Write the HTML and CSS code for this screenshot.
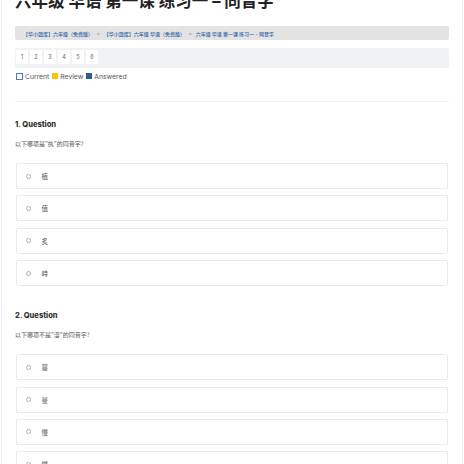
FILE: index.html
```html
<!DOCTYPE html>
<html lang="zh">
<head>
<meta charset="utf-8">
<title>六年级 华语 第一课 练习一 – 同音字</title>
<link rel="stylesheet" href="styles.css">
</head>
<body>
<div class="page">
  <h1 class="title">六年级 华语 第一课 练习一 – 同音字</h1>
  <div class="crumbs">
    <a class="crumb">【华小题库】六年级（免费版）</a>
    <span class="sep">&gt;</span>
    <a class="crumb">【华小题库】六年级 华语（免费版）</a>
    <span class="sep">&gt;</span>
    <span class="crumb">六年级 华语 第一课 练习一 – 同音字</span>
  </div>
  <div class="pager">
    <span class="pnum">1</span>
    <span class="pnum">2</span>
    <span class="pnum">3</span>
    <span class="pnum">4</span>
    <span class="pnum">5</span>
    <span class="pnum">6</span>
  </div>
  <div class="legend">
    <span class="sq sq-current"></span><span class="ltext">Current</span>
    <span class="sq sq-review"></span><span class="ltext">Review</span>
    <span class="sq sq-answered"></span><span class="ltext">Answered</span>
  </div>
  <div class="rule"></div>

  <div class="question">
    <h3 class="qhead">1. Question</h3>
    <p class="qtext">以下哪项是"执"的同音字?</p>
    <ul class="options">
      <li class="opt"><span class="radio"></span><span class="otext">植</span></li>
      <li class="opt"><span class="radio"></span><span class="otext">值</span></li>
      <li class="opt"><span class="radio"></span><span class="otext">炙</span></li>
      <li class="opt"><span class="radio"></span><span class="otext">峙</span></li>
    </ul>
  </div>

  <div class="question">
    <h3 class="qhead">2. Question</h3>
    <p class="qtext">以下哪项不是"漫"的同音字?</p>
    <ul class="options">
      <li class="opt"><span class="radio"></span><span class="otext">蔓</span></li>
      <li class="opt"><span class="radio"></span><span class="otext">曼</span></li>
      <li class="opt"><span class="radio"></span><span class="otext">慢</span></li>
      <li class="opt"><span class="radio"></span><span class="otext">馒</span></li>
    </ul>
  </div>
</div>
</body>
</html>
```
FILE: styles.css
```css
html, body {
  margin: 0;
  padding: 0;
  background: #ffffff;
}
body {
  font-family: Inter, "Noto Sans", "Noto Sans CJK SC", sans-serif;
  color: #444;
  overflow: hidden;
}
.page {
  margin: -9px 1px 0 1px;
  padding: 0 13px;
  border-left: 1px solid #f2f2f2;
  border-right: 1px solid #f2f2f2;
  min-height: 520px;
}
.title {
  margin: 0;
  font-size: 16.5px;
  line-height: 20px;
  font-weight: 700;
  color: #222;
  font-family: Inter, "Noto Sans CJK SC", sans-serif;
}
.crumbs {
  margin-top: 15px;
  height: 14px;
  display: flex;
  align-items: center;
  gap: 3px;
  padding: 0 8px;
  background: #e3e3e3;
  border-radius: 2px;
  font-size: 5px;
  font-family: "Noto Sans CJK SC", sans-serif;
}
.crumb {
  color: #3366aa;
  font-weight: 500;
}
.sep {
  color: #777;
  padding: 0 1px;
}
.pager {
  margin-top: 8px;
  height: 20px;
  box-sizing: border-box;
  padding: 2px 1px;
  display: flex;
  align-items: flex-start;
  gap: 2px;
  background: #f1f2f6;
  border-radius: 2px;
}
.pnum {
  width: 12px;
  height: 14px;
  background: #ffffff;
  display: flex;
  align-items: center;
  justify-content: center;
  font-size: 5.5px;
  color: #666;
}
.legend {
  margin-top: 4px;
  height: 8px;
  display: flex;
  align-items: center;
  padding-left: 1px;
  font-size: 6.8px;
  color: #555;
}
.sq {
  width: 7px;
  height: 7px;
  box-sizing: border-box;
  margin-right: 2px;
}
.sq-current {
  border: 1px solid #4d7cb8;
  background: #fff;
}
.sq-review {
  background: #f7c600;
  width: 6px;
  height: 6px;
}
.sq-answered {
  background: #2f5e97;
  width: 6px;
  height: 6px;
}
.ltext {
  margin-right: 3px;
}
.rule {
  margin-top: 21px;
  height: 1px;
  background: #efefef;
}
.question {
  margin-top: 18px;
}
.question + .question {
  margin-top: 25px;
}
.qhead {
  margin: 0;
  font-size: 7.5px;
  line-height: 10px;
  font-weight: 800;
  color: #333;
}
.qtext {
  margin: 9px 0 0 0;
  font-size: 6px;
  line-height: 9px;
  color: #555;
  font-family: "Noto Sans CJK SC", sans-serif;
}
.options {
  list-style: none;
  margin: 15px 0 0 0;
  padding: 0 1px;
  display: flex;
  flex-direction: column;
  gap: 6.4px;
}
.opt {
  height: 26px;
  box-sizing: border-box;
  border: 1px solid #e9eaf0;
  border-radius: 2px;
  display: flex;
  align-items: center;
  padding-left: 8.5px;
  background: #fff;
}
.radio {
  width: 5px;
  height: 5px;
  box-sizing: border-box;
  border: 0.7px solid #b0b0b0;
  border-radius: 50%;
}
.otext {
  margin-left: 11px;
  font-size: 6.5px;
  color: #555;
  font-family: "Noto Sans CJK SC", sans-serif;
}
```
